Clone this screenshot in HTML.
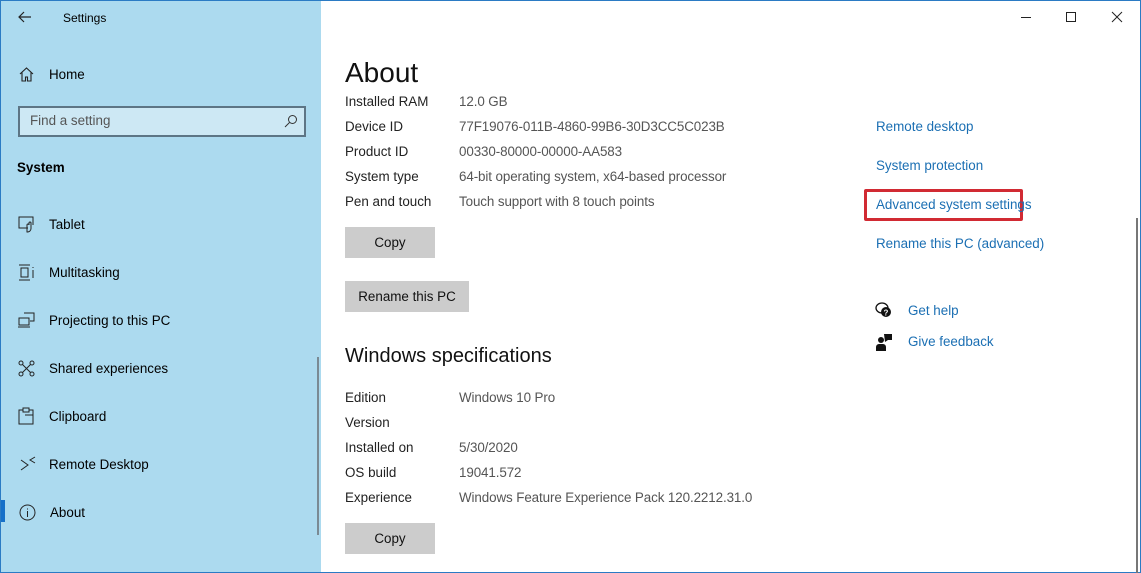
<!DOCTYPE html>
<html><head><style>
*{margin:0;padding:0;box-sizing:border-box}
body{width:1141px;height:573px;overflow:hidden;font-family:"Liberation Sans",sans-serif;background:#fff;position:relative;color:#000}
.side{position:absolute;left:0;top:0;width:321px;height:573px;background:#acdaef;border-left:1px solid #2b7bc4;border-top:1px solid #2b7bc4;border-bottom:1px solid #2b7bc4}
.t{position:absolute;font-size:13.4px;white-space:nowrap}
.ic{position:absolute}
.lbl{position:absolute;left:345px;font-size:13.4px;color:#222;white-space:nowrap}
.val{position:absolute;left:459px;font-size:13.4px;color:#555;white-space:nowrap;letter-spacing:-0.1px}
.btn{position:absolute;left:345px;width:90px;height:31px;background:#ccc;font-size:13.4px;text-align:center;line-height:31px;color:#111}
.lnk{position:absolute;left:876px;font-size:13.4px;color:#1b6fb3;white-space:nowrap}
</style></head><body>
<div style="position:absolute;inset:0;border:1px solid #2b7bc4"></div>
<div class="side">
<svg class="ic" style="left:17px;top:10px" width="14" height="12" viewBox="0 0 14 12"><path d="M13 6H1M6 1L1 6l5 5" stroke="#222" fill="none" stroke-width="1.2"/></svg>
<div class="t" style="left:62px;top:10px;font-size:12px">Settings</div>
<svg class="ic" style="left:18px;top:66px" width="15" height="15" viewBox="0 0 15 15"><path d="M1 7L7.5 1 14 7M3 5.5V14h3.5V10h2v4H12V5.5" stroke="#222" fill="none" stroke-width="1.1"/></svg>
<div class="t" style="left:48px;top:66px">Home</div>
<div style="position:absolute;left:17px;top:105px;width:288px;height:31px;border:2px solid #5d7585;background:#cde8f4"></div>
<div class="t" style="left:29px;top:112px;color:#555">Find a setting</div>
<svg class="ic" style="left:283px;top:113px" width="14" height="14" viewBox="0 0 14 14"><circle cx="8.5" cy="5.5" r="4" stroke="#333" fill="none"/><path d="M5.5 8.5L1 13" stroke="#333"/></svg>
<div class="t" style="left:16px;top:159px;font-weight:bold">System</div>
<svg class="ic" style="left:17px;top:215px" width="17" height="17" viewBox="0 0 17 17" stroke="#222" fill="none"><path d="M10 12H1V1h14v8"/><path d="M9 16V9a1 1 0 012 0v-2a1 1 0 012 0v5.5a3.5 3.5 0 01-4 3.5z"/></svg>
<div class="t" style="left:48px;top:216px">Tablet</div>
<svg class="ic" style="left:17px;top:263px" width="17" height="17" viewBox="0 0 17 17" stroke="#222" fill="none"><path d="M1 1h11M1 16h11M3 4h7v9H3zM15 3v1M15 6v8"/></svg>
<div class="t" style="left:48px;top:264px">Multitasking</div>
<svg class="ic" style="left:17px;top:311px" width="17" height="17" viewBox="0 0 17 17" stroke="#222" fill="none"><path d="M6 1h10v8h-4M1 6h10v7H1zM0 15h12"/></svg>
<div class="t" style="left:48px;top:312px">Projecting to this PC</div>
<svg class="ic" style="left:17px;top:359px" width="17" height="17" viewBox="0 0 17 17" stroke="#222" fill="none"><circle cx="3" cy="3" r="2"/><circle cx="14" cy="3" r="2"/><circle cx="3" cy="14" r="2"/><circle cx="14" cy="14" r="2"/><path d="M4.5 4.5l8 8M12.5 4.5l-8 8"/></svg>
<div class="t" style="left:48px;top:360px">Shared experiences</div>
<svg class="ic" style="left:17px;top:406px" width="17" height="18" viewBox="0 0 17 18" stroke="#222" fill="none"><path d="M5 3H1v14h14V3h-4M5 1h6v4H5zM7 8h8v9"/></svg>
<div class="t" style="left:48px;top:408px">Clipboard</div>
<svg class="ic" style="left:19px;top:455px" width="16" height="16" viewBox="0 0 16 16" stroke="#222" fill="none"><path d="M1 4l7 5-7 5M15 1l-5 3 5 3"/></svg>
<div class="t" style="left:48px;top:456px">Remote Desktop</div>
<div style="position:absolute;left:0;top:499px;width:4px;height:22px;background:#1670c9"></div>
<svg class="ic" style="left:18px;top:503px" width="17" height="17" viewBox="0 0 17 17" stroke="#222" fill="none"><circle cx="8.5" cy="8.5" r="7.5"/><path d="M8.5 7v6M8.5 4.5v1"/></svg>
<div class="t" style="left:49px;top:504px">About</div>
<div style="position:absolute;left:316px;top:356px;width:2px;height:178px;background:#7a8a94"></div>
</div>
<div style="position:absolute;left:1021px;top:17px;width:10px;height:1px;background:#222"></div>
<div style="position:absolute;left:1066px;top:12px;width:10px;height:10px;border:1px solid #222"></div>
<svg class="ic" style="left:1111px;top:11px" width="12" height="12" viewBox="0 0 12 12"><path d="M1 1l10 10M11 1L1 11" stroke="#222"/></svg>
<div class="t" style="left:345px;top:57px;font-size:28px;color:#111">About</div>
<div class="lbl" style="top:94px">Installed RAM</div><div class="val" style="top:94px">12.0 GB</div>
<div class="lbl" style="top:119px">Device ID</div><div class="val" style="top:119px">77F19076-011B-4860-99B6-30D3CC5C023B</div>
<div class="lbl" style="top:144px">Product ID</div><div class="val" style="top:144px">00330-80000-00000-AA583</div>
<div class="lbl" style="top:169px">System type</div><div class="val" style="top:169px">64-bit operating system, x64-based processor</div>
<div class="lbl" style="top:194px">Pen and touch</div><div class="val" style="top:194px">Touch support with 8 touch points</div>
<div class="btn" style="top:227px">Copy</div>
<div class="btn" style="top:281px;width:124px">Rename this PC</div>
<div class="t" style="left:345px;top:345px;font-size:20px;color:#111">Windows specifications</div>
<div class="lbl" style="top:390px">Edition</div><div class="val" style="top:390px">Windows 10 Pro</div>
<div class="lbl" style="top:415px">Version</div>
<div class="lbl" style="top:440px">Installed on</div><div class="val" style="top:440px">5/30/2020</div>
<div class="lbl" style="top:465px">OS build</div><div class="val" style="top:465px">19041.572</div>
<div class="lbl" style="top:490px">Experience</div><div class="val" style="top:490px">Windows Feature Experience Pack 120.2212.31.0</div>
<div class="btn" style="top:523px">Copy</div>
<div class="lnk" style="top:119px">Remote desktop</div>
<div class="lnk" style="top:158px">System protection</div>
<div style="position:absolute;left:864px;top:189px;width:159px;height:32px;border:3px solid #d12a33;border-radius:2px"></div>
<div class="lnk" style="top:197px">Advanced system settings</div>
<div class="lnk" style="top:236px">Rename this PC (advanced)</div>
<svg class="ic" style="left:875px;top:302px" width="18" height="17" viewBox="0 0 18 17"><ellipse cx="7" cy="6" rx="6" ry="5" stroke="#111" fill="none" stroke-width="1.3"/><circle cx="11" cy="10" r="5" fill="#111"/><text x="11" y="13.5" font-size="8" fill="#fff" text-anchor="middle" font-family="Liberation Sans" font-weight="bold">?</text></svg>
<div class="lnk" style="left:908px;top:303px">Get help</div>
<svg class="ic" style="left:876px;top:333px" width="17" height="18" viewBox="0 0 17 18"><circle cx="5" cy="7" r="3" fill="#111"/><path d="M0 18v-4a3 3 0 013-3h4a3 3 0 013 3v4z" fill="#111"/><path d="M8 1h8v6h-4l-3 2z" fill="#111"/></svg>
<div class="lnk" style="left:908px;top:334px">Give feedback</div>
<div style="position:absolute;left:1136px;top:218px;width:2px;height:355px;background:#777"></div>
</body></html>
